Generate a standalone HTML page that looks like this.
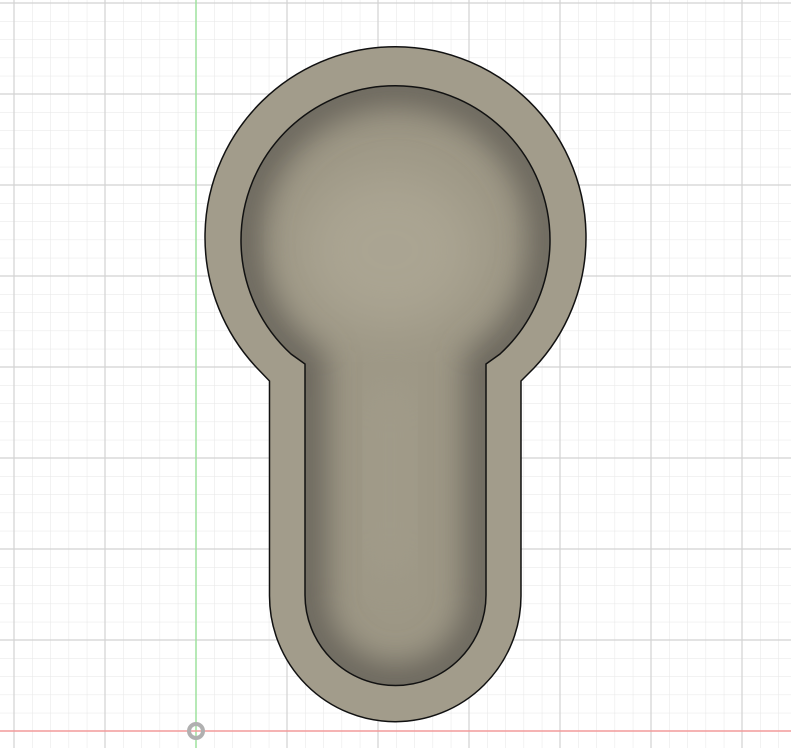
<!DOCTYPE html>
<html><head><style>html,body{margin:0;padding:0;background:#fff;width:791px;height:748px;overflow:hidden}</style></head>
<body>
<svg width="791" height="748" xmlns="http://www.w3.org/2000/svg">
<defs>
<pattern id="minor" x="196" y="3" width="18.2" height="18.2" patternUnits="userSpaceOnUse">
<path d="M0 0V18.2M0 0H18.2" stroke="#e6e6e6" stroke-width="1" fill="none"/>
</pattern>
<filter id="bl" x="-20%" y="-20%" width="140%" height="140%"><feGaussianBlur stdDeviation="16"/></filter>
<filter id="bl2" x="-20%" y="-20%" width="140%" height="140%"><feGaussianBlur stdDeviation="25"/></filter>
<clipPath id="ic"><path id="inner" d="M291 354 A154.5 154.5 0 1 1 500 354 L486 364 V595 A90.5 90.5 0 0 1 305 595 V364 Z"/></clipPath>
</defs>
<rect width="791" height="748" fill="url(#minor)"/>
<g stroke="#d2d2d2" stroke-width="1.2">
<line x1="105" y1="0" x2="105" y2="748"/><line x1="14" y1="0" x2="14" y2="748"/><line x1="287" y1="0" x2="287" y2="748"/><line x1="378" y1="0" x2="378" y2="748"/><line x1="469" y1="0" x2="469" y2="748"/><line x1="560" y1="0" x2="560" y2="748"/><line x1="651" y1="0" x2="651" y2="748"/><line x1="742" y1="0" x2="742" y2="748"/>
<line x1="0" y1="3" x2="791" y2="3"/><line x1="0" y1="94" x2="791" y2="94"/><line x1="0" y1="185" x2="791" y2="185"/><line x1="0" y1="276" x2="791" y2="276"/><line x1="0" y1="367" x2="791" y2="367"/><line x1="0" y1="458" x2="791" y2="458"/><line x1="0" y1="549" x2="791" y2="549"/><line x1="0" y1="640" x2="791" y2="640"/>
</g>
<line x1="196" y1="0" x2="196" y2="748" stroke="#9ee29e" stroke-width="1.5"/>
<line x1="0" y1="731" x2="791" y2="731" stroke="#f29a9a" stroke-width="1.5"/>
<circle cx="196" cy="731" r="7" fill="none" stroke="#b0b0b0" stroke-width="4"/>
<path d="M257 368 A190.5 190.5 0 1 1 534 368 L521 381 V596 A125.75 125.75 0 0 1 269.5 596 V381 Z" fill="#a29c8b" stroke="#111" stroke-width="1.5"/>
<g clip-path="url(#ic)">
<rect x="230" y="80" width="330" height="620" fill="#9d9785"/>
<path d="M291 354 A154.5 154.5 0 1 1 500 354 L486 364 V595 A90.5 90.5 0 0 1 305 595 V364 Z" fill="none" stroke="#67635a" stroke-width="40" filter="url(#bl)"/>
<ellipse cx="390" cy="250" rx="90" ry="80" fill="#aaa492" filter="url(#bl2)"/>
<rect x="370" y="380" width="40" height="200" fill="#a39d8b" filter="url(#bl2)"/>
</g>
<use href="#inner" fill="none" stroke="#111" stroke-width="1.5"/>
</svg>
</body></html>
